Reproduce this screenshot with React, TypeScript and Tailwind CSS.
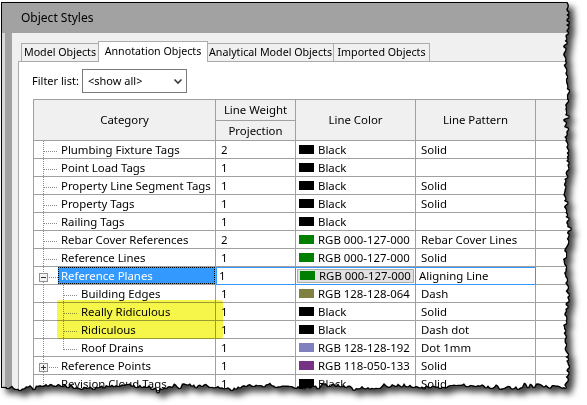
import { useMemo } from "react";

type Row = {
  name: string;
  level: 1 | 2;
  weight: string;
  color: string;
  swatch: string;
  pattern: string;
  toggle?: "minus" | "plus";
  lastChild?: boolean;
  selected?: boolean;
};

const ROWS: Row[] = [
  { name: "Plumbing Fixture Tags", level: 1, weight: "2", color: "Black", swatch: "#000000", pattern: "Solid" },
  { name: "Point Load Tags", level: 1, weight: "1", color: "Black", swatch: "#000000", pattern: "" },
  { name: "Property Line Segment Tags", level: 1, weight: "1", color: "Black", swatch: "#000000", pattern: "Solid" },
  { name: "Property Tags", level: 1, weight: "1", color: "Black", swatch: "#000000", pattern: "Solid" },
  { name: "Railing Tags", level: 1, weight: "1", color: "Black", swatch: "#000000", pattern: "" },
  { name: "Rebar Cover References", level: 1, weight: "2", color: "RGB 000-127-000", swatch: "#007f00", pattern: "Rebar Cover Lines" },
  { name: "Reference Lines", level: 1, weight: "1", color: "RGB 000-127-000", swatch: "#007f00", pattern: "Solid" },
  { name: "Reference Planes", level: 1, weight: "1", color: "RGB 000-127-000", swatch: "#007f00", pattern: "Aligning Line", toggle: "minus", selected: true },
  { name: "Building Edges", level: 2, weight: "1", color: "RGB 128-128-064", swatch: "#808040", pattern: "Dash" },
  { name: "Really Ridiculous", level: 2, weight: "1", color: "Black", swatch: "#000000", pattern: "Solid" },
  { name: "Ridiculous", level: 2, weight: "1", color: "Black", swatch: "#000000", pattern: "Dash dot" },
  { name: "Roof Drains", level: 2, weight: "1", color: "RGB 128-128-192", swatch: "#8080c0", pattern: "Dot 1mm", lastChild: true },
  { name: "Reference Points", level: 1, weight: "1", color: "RGB 118-050-133", swatch: "#763285", pattern: "Solid", toggle: "plus" },
  { name: "Revision Cloud Tags", level: 1, weight: "1", color: "Black", swatch: "#000000", pattern: "Solid" },
];

const TABS = [
  { label: "Model Objects", w: "w-[78px]" },
  { label: "Annotation Objects", w: "w-[110px]", active: true },
  { label: "Analytical Model Objects", w: "w-[127px]" },
  { label: "Imported Objects", w: "w-[97px]" },
];

// jagged "torn paper" outline, seeded so it's the same every render
function tornEdge(right: number, bottom: number) {
  let s = 918273;
  const rnd = () => {
    s = (s * 48271) % 2147483647;
    return s / 2147483647;
  };
  const jag = (i: number) => {
    let d = (rnd() - 0.5) * 3.5 + Math.sin(i / 11) * 1.5;
    if (rnd() > 0.88) d += (rnd() - 0.3) * 6;
    return d;
  };
  const pts = ["0px 0px"];
  for (let y = 0; y <= bottom; y += 2) pts.push(`${(right + jag(y)).toFixed(1)}px ${y}px`);
  for (let x = right; x >= 0; x -= 2) pts.push(`${x}px ${(bottom + jag(x)).toFixed(1)}px`);
  pts.push(`0px ${bottom}px`);
  return `polygon(${pts.join(", ")})`;
}

const DOT = { stroke: "#8c8c8c", strokeDasharray: "1 1" };

function Tree({ r }: { r: Row }) {
  const w = r.level === 2 ? 44 : 24;
  return (
    <svg width={w} height={17} className="shrink-0" shapeRendering="crispEdges">
      {r.toggle ? (
        <>
          <line x1={9.5} y1={0} x2={9.5} y2={6} {...DOT} />
          <line x1={9.5} y1={15} x2={9.5} y2={17} {...DOT} />
          <rect x={5.5} y={6.5} width={8} height={8} fill="#f2f2f2" stroke="#919191" />
          <line x1={7} y1={10.5} x2={12} y2={10.5} stroke="#333" />
          {r.toggle === "plus" && <line x1={9.5} y1={8} x2={9.5} y2={13} stroke="#333" />}
          <line x1={15} y1={10.5} x2={24} y2={10.5} {...DOT} />
        </>
      ) : (
        <>
          <line x1={9.5} y1={0} x2={9.5} y2={17} {...DOT} />
          {r.level === 1 ? (
            <line x1={10} y1={10.5} x2={24} y2={10.5} {...DOT} />
          ) : (
            <>
              <line x1={29.5} y1={0} x2={29.5} y2={r.lastChild ? 11 : 17} {...DOT} />
              <line x1={30} y1={10.5} x2={44} y2={10.5} {...DOT} />
            </>
          )}
        </>
      )}
    </svg>
  );
}

function Swatch({ c }: { c: string }) {
  return <span className="h-[9px] w-[15px] shrink-0" style={{ backgroundColor: c }} />;
}

function DataRow({ r }: { r: Row }) {
  const grid = "border-r border-b border-[#a0a0a0]";
  const sel = "border-r border-b border-[#3399ff]";
  return (
    <div className="flex h-[18px] bg-white">
      <div className={`flex w-[182px] shrink-0 ${grid}`}>
        <Tree r={r} />
        {r.selected ? (
          <span className="flex flex-1 items-center whitespace-nowrap border border-dotted border-black bg-[#3399ff] pl-[2px] text-white">
            {r.name}
          </span>
        ) : (
          <span className="flex items-center whitespace-nowrap pl-[3px]">{r.name}</span>
        )}
      </div>

      <div
        className={`flex w-[80px] shrink-0 items-center ${
          r.selected ? `${sel} pl-[3px] shadow-[inset_1px_1px_0_#3399ff]` : `${grid} pl-[5px]`
        }`}
      >
        {r.weight}
      </div>

      {r.selected ? (
        <div className={`flex w-[120px] shrink-0 items-center px-px shadow-[inset_0_1px_0_#3399ff] ${sel}`}>
          <div className="flex h-[14px] w-full items-center gap-[4px] border border-[#adadad] bg-[#e1e1e1] pl-[2px]">
            <Swatch c={r.swatch} />
            <span className="whitespace-nowrap">{r.color}</span>
          </div>
        </div>
      ) : (
        <div className={`flex w-[120px] shrink-0 items-center gap-[4px] pl-[3px] ${grid}`}>
          <Swatch c={r.swatch} />
          <span className="whitespace-nowrap">{r.color}</span>
        </div>
      )}

      <div
        className={`flex w-[120px] shrink-0 items-center whitespace-nowrap ${
          r.selected ? `${sel} pl-[3px] shadow-[inset_0_1px_0_#3399ff]` : `${grid} pl-[5px]`
        }`}
      >
        {r.pattern}
      </div>
      <div className="flex-1 border-b border-[#a0a0a0]" />
    </div>
  );
}

export default function App() {
  const clip = useMemo(() => tornEdge(564, 383), []);

  return (
    <div className="h-[405px] w-[587px] overflow-hidden bg-white pl-[2px] pt-[3px] font-['Noto_Sans','Open_Sans',sans-serif] text-black">
      <div className="w-[570px] [filter:drop-shadow(1px_0_0_#000)_drop-shadow(0_1px_0_#000)_drop-shadow(-1px_0_0_#000)_drop-shadow(0_-1px_0_#000)_drop-shadow(5px_5px_3px_rgba(0,0,0,0.75))]">
        <div className="flex h-[390px] w-[570px] flex-col overflow-hidden bg-[#a2a2a2]" style={{ clipPath: clip }}>
          {/* title bar */}
          <div className="flex h-[30px] shrink-0 items-center pl-[19px] text-[12px]">Object Styles</div>

          <div className="flex flex-1">
            <div className="w-[3px] shrink-0 bg-[#d8d8d8]" />
            <div className="w-[7px] shrink-0 bg-[#a2a2a2]" />

            <div className="flex flex-1 flex-col bg-[#f0f0f0] pt-[8px]">
              {/* tabs */}
              <div className="flex h-[20px] items-end pl-[9px] text-[10.7px]">
                {TABS.map((t, i) =>
                  t.active ? (
                    <div
                      key={t.label}
                      className={`relative z-10 -mb-px flex h-[21px] items-center justify-center whitespace-nowrap border-x border-t border-[#acacac] bg-white pb-[2px] ${t.w} ${i ? "-ml-px" : ""}`}
                    >
                      {t.label}
                    </div>
                  ) : (
                    <div
                      key={t.label}
                      className={`flex h-[18px] items-center justify-center whitespace-nowrap border-x border-t border-[#acacac] bg-[#f0f0f0] ${t.w} ${i ? "-ml-px" : ""}`}
                    >
                      {t.label}
                    </div>
                  )
                )}
              </div>

              {/* tab page */}
              <div className="ml-[6px] flex flex-1 flex-col border-l border-t border-[#acacac] bg-white pt-[7px]">
                <div className="flex h-[24px] items-center pl-[13px] text-[11px]">
                  <span className="w-[50px]">Filter list:</span>
                  <div className="flex h-[24px] w-[105px] items-center justify-between border border-[#7a7a7a] bg-white pl-[5px] pr-[3px]">
                    <span>&lt;show all&gt;</span>
                    <svg width="10" height="7" viewBox="0 0 10 7">
                      <path d="M1.5 1.5l3.5 3.5 3.5-3.5" fill="none" stroke="#3a3a3a" strokeWidth="1.6" />
                    </svg>
                  </div>
                </div>

                <div className="relative ml-[14px] mt-[6px] border-l border-t border-[#a0a0a0] text-[11.4px]">
                  <div className="flex h-[41px] bg-[#f0f0f0]">
                    <div className="flex w-[182px] shrink-0 items-center justify-center border-r border-b border-[#a0a0a0]">
                      Category
                    </div>
                    <div className="flex w-[80px] shrink-0 flex-col">
                      <div className="flex h-[21px] items-center justify-center border-r border-b border-[#a0a0a0]">
                        Line Weight
                      </div>
                      <div className="flex h-[20px] items-center justify-center border-r border-b border-[#a0a0a0]">
                        Projection
                      </div>
                    </div>
                    <div className="flex w-[120px] shrink-0 items-center justify-center border-r border-b border-[#a0a0a0]">
                      Line Color
                    </div>
                    <div className="flex w-[120px] shrink-0 items-center justify-center border-r border-b border-[#a0a0a0]">
                      Line Pattern
                    </div>
                    <div className="flex-1 border-b border-[#a0a0a0]" />
                  </div>

                  {ROWS.map((r) => (
                    <DataRow key={r.name} r={r} />
                  ))}

                  {/* highlighter mark over two rows */}
                  <div className="pointer-events-none absolute left-[23px] top-[200px] h-[39px] w-[166px] rounded-[3px] bg-[#f6f64a] mix-blend-multiply" />
                </div>
              </div>
            </div>
          </div>
        </div>
      </div>
    </div>
  );
}
